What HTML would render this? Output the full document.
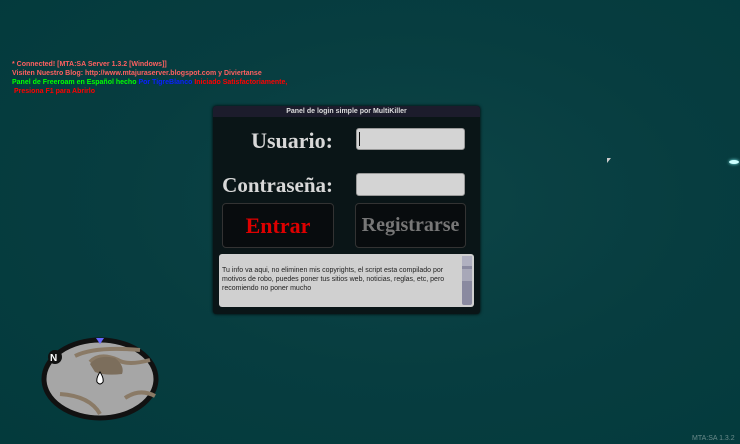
<!DOCTYPE html>
<html><head><meta charset="utf-8"><style>
body{margin:0;width:740px;height:444px;overflow:hidden;background:radial-gradient(ellipse at 55% 45%,#0d4446 0%,#073d40 50%,#033a3c 100%);font-family:"Liberation Sans",sans-serif;position:relative}
.c{position:absolute;left:12px;font-size:7px;font-weight:bold;line-height:8.5px;white-space:nowrap}
.p{position:absolute;left:213px;top:106px;width:267px;height:208px;background:#0a1517;border-radius:3px;box-shadow:0 0 3px #000}
.t{height:11px;background:#1c1c2c;color:#ddd;font-size:7px;font-weight:bold;text-align:center;line-height:11px;border-radius:3px 3px 0 0}
.l{position:absolute;font-family:"Liberation Serif",serif;font-weight:bold;color:#d8d8d8;font-size:22px;text-align:right;white-space:nowrap}
.in{position:absolute;background:#d4d4d4;border-radius:3px;border:1px solid #999}
.b{position:absolute;border:1px solid #333;border-radius:4px;background:#080c0e;font-family:"Liberation Serif",serif;font-weight:bold;font-size:22px;text-align:center;line-height:43px}
.m{position:absolute;left:6px;top:148px;width:255px;height:53px;background:#d0d0d0;border-radius:3px;font-size:7px;color:#222;line-height:9px}
</style></head><body>
<div class="c" style="top:61px;color:#ff6060">* Connected! [MTA:SA Server 1.3.2 [Windows]]</div>
<div class="c" style="top:70px;color:#ff6060">Visiten Nuestro Blog: http://www.mtajuraserver.blogspot.com y Diviertanse</div>
<div class="c" style="top:79px"><span style="color:#00ff00">Panel de Freeroam en Español hecho </span><span style="color:#0a20ff">Por TigreBlanco </span><span style="color:#ff0000">Iniciado Satisfactoriamente,</span></div>
<div class="c" style="top:88px;color:#ff0000">&nbsp;Presiona F1 para Abrirlo</div>
<div class="p"><div class="t">Panel de login simple por MultiKiller</div>
<div class="l" style="left:10px;width:110px;top:22px">Usuario:</div>
<div class="in" style="left:143px;top:22px;width:107px;height:20px"><div style="position:absolute;left:2px;top:3px;width:1px;height:14px;background:#111"></div></div>
<div class="l" style="left:6px;width:114px;top:67px;font-size:21px">Contraseña:</div>
<div class="in" style="left:143px;top:67px;width:107px;height:21px"></div>
<div class="b" style="left:9px;top:97px;width:110px;height:43px;color:#d00">Entrar</div>
<div class="b" style="left:142px;top:97px;width:109px;height:43px;color:#777;font-size:20px">Registrarse</div>
<div class="m"><div style="position:absolute;left:3px;top:12px;width:235px">Tu info va aqui, no eliminen mis copyrights, el script esta compilado por motivos de robo, puedes poner tus sitios web, noticias, reglas, etc, pero recomiendo no poner mucho</div>
<div style="position:absolute;right:2px;top:2px;width:10px;height:49px;background:#8a8aa0;border-radius:2px"><div style="height:10px;background:#b0b0c0;margin-top:0"></div><div style="height:12px;background:#a8a8b8;margin-top:3px"></div></div></div>
</div>
<svg style="position:absolute;left:40px;top:336px" width="122" height="86"><ellipse cx="60" cy="43" rx="56" ry="39" fill="#a6a6a6" stroke="#111" stroke-width="5"/>
<path d="M50 26 Q60 16 78 24 Q88 30 110 24 M20 58 Q50 60 60 78 M85 62 Q100 52 115 60 M35 20 Q55 10 100 14" stroke="#8a7a66" stroke-width="4" fill="none"/>
<path d="M50 28 Q58 18 75 22 Q85 30 82 38 Q65 40 55 36 Z" fill="#7c6e5c"/>
<path d="M60 36 Q56 42 57 46 Q60 50 63 46 Q64 42 60 36Z" fill="#fff" stroke="#000"/>
<polygon points="56,2 64,2 60,8" fill="#66f"/>
<circle cx="15" cy="21" r="7" fill="#111"/><text x="10" y="25" font-size="10" font-weight="bold" fill="#fff" font-family="Liberation Sans">N</text></svg>
<div style="position:absolute;left:607px;top:158px;width:0;height:0;border-left:4px solid #ccc;border-bottom:5px solid transparent"></div>
<div style="position:absolute;left:729px;top:160px;width:10px;height:4px;background:#cff;border-radius:50%;box-shadow:0 0 3px #8ff"></div>
<div style="position:absolute;left:692px;top:435px;font-size:7px;color:#6a8a8a">MTA:SA 1.3.2</div>
</body></html>
